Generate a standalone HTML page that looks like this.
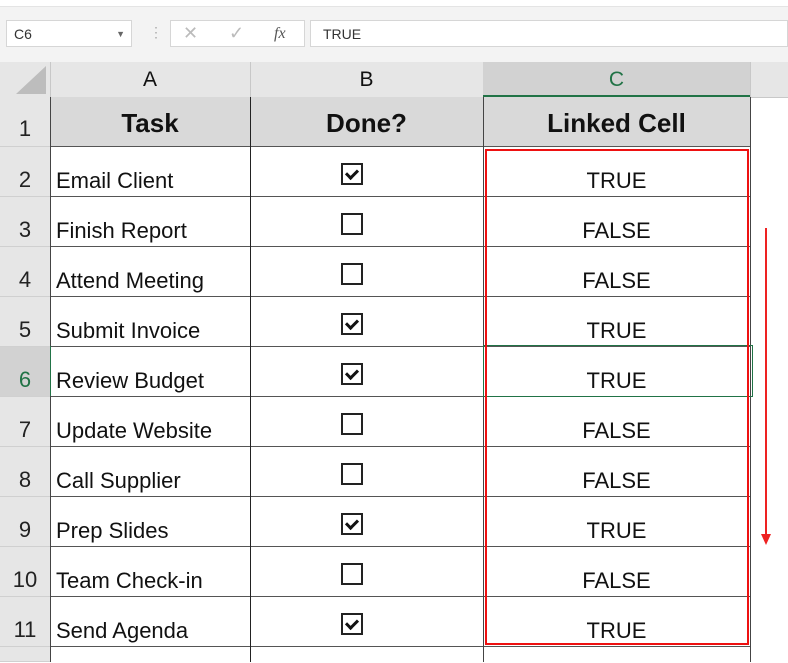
<!DOCTYPE html><html><head><style>
body{margin:0;width:788px;height:662px;background:#fff;position:relative;overflow:hidden;font-family:"Liberation Sans",sans-serif}
.a{position:absolute}
.rh{position:absolute;left:0;width:50px;background:#e6e6e6;border-bottom:1px solid #d0d0d0;font-size:22px;color:#222;text-align:center;box-sizing:border-box}
.t{position:absolute;font-size:22px;color:#111}
.hl{position:absolute;left:50px;width:700px;height:1px;background:#555}
.cb{position:absolute;left:341px;width:18px;height:18px;border:2px solid #222;background:#fff}
.cb.k::after{content:"";position:absolute;left:5px;top:2px;width:5px;height:9px;border:solid #111;border-width:0 3px 3px 0;transform:rotate(45deg)}
.v{position:absolute;left:483px;width:267px;text-align:center;font-size:22px;color:#111}
</style></head><body>
<div class="a" style="left:0;top:0;width:788px;height:6px;background:#fff;border-bottom:1px solid #e4e4e4"></div>
<div class="a" style="left:0;top:7px;width:788px;height:55px;background:#f3f3f3"></div>
<div class="a" style="left:6px;top:20px;width:126px;height:27px;background:#fff;border:1px solid #d6d6d6;font-size:14px;color:#333;line-height:27px;padding-left:7px;box-sizing:border-box">C6<span style="position:absolute;right:6px;top:0;font-size:9px;color:#666">▼</span></div>
<div class="a" style="left:149px;top:24px;color:#aaa;font-size:14px">⋮</div>
<div class="a" style="left:170px;top:20px;width:135px;height:27px;background:#fff;border:1px solid #d6d6d6;box-sizing:border-box;color:#bbb;font-size:18px;line-height:25px"><span style="position:absolute;left:12px">✕</span><span style="position:absolute;left:58px">✓</span><span style="position:absolute;left:103px;color:#555;font-family:'Liberation Serif';font-style:italic;font-size:16px">fx</span></div>
<div class="a" style="left:310px;top:20px;width:478px;height:27px;background:#fff;border:1px solid #d6d6d6;box-sizing:border-box;font-size:14px;color:#333;line-height:27px;padding-left:12px">TRUE</div>
<div class="a" style="left:0;top:62px;width:788px;height:35px;background:#e6e6e6;border-bottom:1px solid #c8c8c8"></div>
<div class="a" style="left:16px;top:66px;width:0;height:0;border-left:30px solid transparent;border-bottom:28px solid #bdbdbd"></div>
<div class="a" style="left:50px;top:62px;width:1px;height:35px;background:#c8c8c8"></div>
<div class="a" style="left:250px;top:62px;width:1px;height:35px;background:#c8c8c8"></div>
<div class="a" style="left:483px;top:62px;width:267px;height:35px;background:#d2d2d2;border-bottom:2px solid #217346;box-sizing:border-box"></div>
<div class="a" style="left:750px;top:62px;width:1px;height:35px;background:#c8c8c8"></div>
<div class="t" style="left:50px;width:200px;top:68px;text-align:center;font-size:21px">A</div>
<div class="t" style="left:250px;width:233px;top:68px;text-align:center;font-size:21px">B</div>
<div class="t" style="left:483px;width:267px;top:68px;text-align:center;font-size:21px;color:#217346">C</div>
<div class="rh" style="top:97px;height:50px;line-height:64px">1</div>
<div class="a" style="left:50px;top:97px;width:700px;height:50px;background:#d9d9d9"></div>
<div class="t" style="left:50px;width:200px;top:108px;text-align:center;font-weight:bold;font-size:26px">Task</div>
<div class="t" style="left:250px;width:233px;top:108px;text-align:center;font-weight:bold;font-size:26px">Done?</div>
<div class="t" style="left:483px;width:267px;top:108px;text-align:center;font-weight:bold;font-size:26px">Linked Cell</div>
<div class="rh" style="top:147px;height:50px;line-height:66px">2</div>
<div class="rh" style="top:197px;height:50px;line-height:66px">3</div>
<div class="rh" style="top:247px;height:50px;line-height:66px">4</div>
<div class="rh" style="top:297px;height:50px;line-height:66px">5</div>
<div class="rh" style="top:347px;height:50px;line-height:66px;background:#d2d2d2;color:#217346">6</div>
<div class="rh" style="top:397px;height:50px;line-height:66px">7</div>
<div class="rh" style="top:447px;height:50px;line-height:66px">8</div>
<div class="rh" style="top:497px;height:50px;line-height:66px">9</div>
<div class="rh" style="top:547px;height:50px;line-height:66px">10</div>
<div class="rh" style="top:597px;height:50px;line-height:66px">11</div>
<div class="rh" style="top:647px;height:15px"></div>
<div class="hl" style="top:146px"></div><div class="hl" style="top:196px"></div><div class="hl" style="top:246px"></div><div class="hl" style="top:296px"></div><div class="hl" style="top:346px"></div><div class="hl" style="top:396px"></div><div class="hl" style="top:446px"></div><div class="hl" style="top:496px"></div><div class="hl" style="top:546px"></div><div class="hl" style="top:596px"></div><div class="hl" style="top:646px"></div>
<div class="a" style="left:50px;top:97px;width:1px;height:565px;background:#444"></div>
<div class="a" style="left:250px;top:97px;width:1px;height:565px;background:#222"></div>
<div class="a" style="left:483px;top:97px;width:1px;height:565px;background:#444"></div>
<div class="a" style="left:750px;top:97px;width:1px;height:565px;background:#444"></div>
<div class="a" style="left:50px;top:346px;width:1px;height:50px;background:#217346"></div>
<div class="t" style="left:56px;top:168px">Email Client</div>
<div class="t" style="left:56px;top:218px">Finish Report</div>
<div class="t" style="left:56px;top:268px">Attend Meeting</div>
<div class="t" style="left:56px;top:318px">Submit Invoice</div>
<div class="t" style="left:56px;top:368px">Review Budget</div>
<div class="t" style="left:56px;top:418px">Update Website</div>
<div class="t" style="left:56px;top:468px">Call Supplier</div>
<div class="t" style="left:56px;top:518px">Prep Slides</div>
<div class="t" style="left:56px;top:568px">Team Check-in</div>
<div class="t" style="left:56px;top:618px">Send Agenda</div>
<div class="cb k" style="top:163px"></div>
<div class="cb" style="top:213px"></div>
<div class="cb" style="top:263px"></div>
<div class="cb k" style="top:313px"></div>
<div class="cb k" style="top:363px"></div>
<div class="cb" style="top:413px"></div>
<div class="cb" style="top:463px"></div>
<div class="cb k" style="top:513px"></div>
<div class="cb" style="top:563px"></div>
<div class="cb k" style="top:613px"></div>
<div class="v" style="top:168px">TRUE</div>
<div class="v" style="top:218px">FALSE</div>
<div class="v" style="top:268px">FALSE</div>
<div class="v" style="top:318px">TRUE</div>
<div class="v" style="top:368px">TRUE</div>
<div class="v" style="top:418px">FALSE</div>
<div class="v" style="top:468px">FALSE</div>
<div class="v" style="top:518px">TRUE</div>
<div class="v" style="top:568px">FALSE</div>
<div class="v" style="top:618px">TRUE</div>
<div class="a" style="left:483px;top:345px;width:270px;height:52px;border:1px solid #217346;box-sizing:border-box"></div>
<div class="a" style="left:485px;top:149px;width:264px;height:496px;border:2px solid #ee1111;box-sizing:border-box"></div>
<div class="a" style="left:765px;top:228px;width:2px;height:308px;background:#e22"></div>
<div class="a" style="left:761px;top:534px;width:0;height:0;border-left:5px solid transparent;border-right:5px solid transparent;border-top:11px solid #e22"></div>
</body></html>
